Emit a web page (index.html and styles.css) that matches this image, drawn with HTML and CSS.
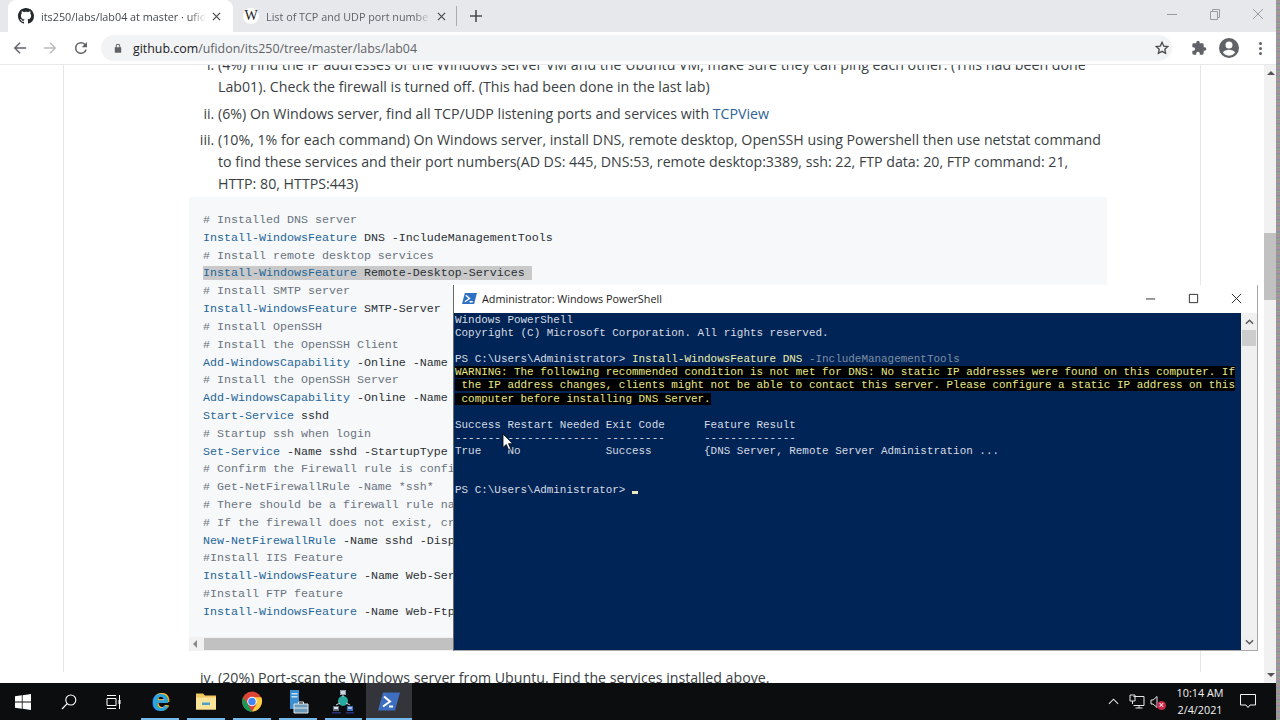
FILE: index.html
```html
<!DOCTYPE html>
<html lang="en">
<head>
  <meta charset="UTF-8">
  <title>its250/labs/lab04 at master</title>
  <link rel="stylesheet" href="styles.css">
</head>
<body>

  <!-- Browser tabs -->
  <div class="tabstrip">
    <div class="tab tab-active">
      <svg class="favicon" viewBox="0 0 16 16"><path fill="#24292e" d="M8 0C3.58 0 0 3.58 0 8c0 3.54 2.29 6.53 5.47 7.59.4.07.55-.17.55-.38 0-.19-.01-.82-.01-1.49-2.01.37-2.53-.49-2.69-.94-.09-.23-.48-.94-.82-1.13-.28-.15-.68-.52-.01-.53.63-.01 1.08.58 1.23.82.72 1.21 1.87.87 2.33.66.07-.52.28-.87.51-1.07-1.78-.2-3.64-.89-3.64-3.95 0-.87.31-1.59.82-2.15-.08-.2-.36-1.02.08-2.12 0 0 .67-.21 2.2.82.64-.18 1.32-.27 2-.27s1.36.09 2 .27c1.53-1.04 2.2-.82 2.2-.82.44 1.1.16 1.92.08 2.12.51.56.82 1.27.82 2.15 0 3.07-1.87 3.75-3.65 3.95.29.25.54.73.54 1.48 0 1.07-.01 1.93-.01 2.2 0 .21.15.46.55.38A8.01 8.01 0 0 0 16 8c0-4.42-3.58-8-8-8z"/></svg>
      <span class="tab-title">its250/labs/lab04 at master · ufid</span>
      <svg class="tab-close" viewBox="0 0 10 10"><path d="M1 1l8 8M9 1l-8 8"/></svg>
    </div>
    <div class="tab">
      <span class="wiki-icon">W</span>
      <span class="tab-title">List of TCP and UDP port numbe</span>
      <svg class="tab-close" viewBox="0 0 10 10"><path d="M1 1l8 8M9 1l-8 8"/></svg>
    </div>
    <div class="tab-sep"></div>
    <svg class="new-tab" viewBox="0 0 12 12"><path d="M6 0v12M0 6h12"/></svg>
    <div class="win-controls">
      <svg viewBox="0 0 12 12"><path d="M1 6.5h10"/></svg>
      <svg viewBox="0 0 12 12"><path d="M1.5 3.5h7v8h-7zM3.5 3.5V1.5h7v8h-2"/></svg>
      <svg viewBox="0 0 12 12"><path d="M1 1l10 10M11 1L1 11"/></svg>
    </div>
  </div>

  <!-- Address bar -->
  <div class="toolbar">
    <svg class="tool-btn" viewBox="0 0 16 16"><path d="M15 8H2M8 2L2 8l6 6"/></svg>
    <svg class="tool-btn tool-off" viewBox="0 0 16 16"><path d="M1 8h13M8 2l6 6-6 6"/></svg>
    <svg class="tool-btn reload" viewBox="0 0 24 24"><path d="M17.65 6.35A7.96 7.96 0 0 0 12 4a8 8 0 1 0 7.73 10h-2.08A6 6 0 1 1 12 6c1.66 0 3.14.69 4.22 1.78L13 11h7V4l-2.35 2.35z"/></svg>
    <div class="omnibox">
      <svg class="lock" viewBox="0 0 10 12"><path d="M2.2 5V3.4a2.8 2.8 0 0 1 5.6 0V5H9v7H1V5zM3.4 5h3.2V3.4a1.6 1.6 0 0 0-3.2 0z"/></svg>
      <span class="url"><span class="url-host">github.com</span>/ufidon/its250/tree/master/labs/lab04</span>
      <svg class="star" viewBox="0 0 24 24"><path d="M12 3.5l2.6 5.6 6.1.7-4.5 4.2 1.2 6L12 17l-5.4 3 1.2-6-4.5-4.2 6.1-.7z"/></svg>
    </div>
    <svg class="puzzle" viewBox="0 0 24 24"><path d="M20.5 11H19V7a2 2 0 0 0-2-2h-4V3.5a2.5 2.5 0 0 0-5 0V5H4a2 2 0 0 0-2 2v3.800h1.500a2.700 2.700 0 0 1 0 5.400H2V20a2 2 0 0 0 2 2h3.800v-1.500a2.700 2.700 0 0 1 5.400 0V22H17a2 2 0 0 0 2-2v-4h1.500a2.500 2.500 0 0 0 0-5z"/></svg>
    <svg class="avatar" viewBox="0 0 24 24"><path d="M12 2a10 10 0 1 0 0 20 10 10 0 0 0 0-20zm0 3.500a3.500 3.500 0 1 1 0 7 3.500 3.500 0 0 1 0-7zm0 14.200a7.600 7.600 0 0 1-6-2.900c0-2 4-3.100 6-3.100s6 1.100 6 3.100a7.600 7.600 0 0 1-6 2.900z"/></svg>
    <div class="menu-dots"><i></i><i></i><i></i></div>
  </div>

  <!-- Page and the PowerShell window on top of it -->
  <div class="viewport">
    <div class="page">
      <div class="article">
        <ol class="steps">
          <li>(4%) Find the IP addresses of the Windows server VM and the Ubuntu VM, make sure they can ping each other. (This had been done Lab01). Check the firewall is turned off. (This had been done in the last lab)</li>
          <li>(6%) On Windows server, find all TCP/UDP listening ports and services with <a href="#">TCPView</a></li>
          <li>(10%, 1% for each command) On Windows server, install DNS, remote desktop, OpenSSH using Powershell then use netstat command to find these services and their port numbers(AD DS: 445, DNS:53, remote desktop:3389, ssh: 22, FTP data: 20, FTP command: 21, HTTP: 80, HTTPS:443)</li>
        </ol>

        <div class="code-block">
<pre class="code"><span class="cm"># Installed DNS server</span>
<span class="cmd">Install-WindowsFeature</span> DNS -IncludeManagementTools
<span class="cm"># Install remote desktop services</span>
<span class="selected"><span class="cmd">Install-WindowsFeature</span> Remote-Desktop-Services</span>
<span class="cm"># Install SMTP server</span>
<span class="cmd">Install-WindowsFeature</span> SMTP-Server
<span class="cm"># Install OpenSSH</span>
<span class="cm"># Install the OpenSSH Client</span>
<span class="cmd">Add-WindowsCapability</span> -Online -Name
<span class="cm"># Install the OpenSSH Server</span>
<span class="cmd">Add-WindowsCapability</span> -Online -Name
<span class="cmd">Start-Service</span> sshd
<span class="cm"># Startup ssh when login</span>
<span class="cmd">Set-Service</span> -Name sshd -StartupType
<span class="cm"># Confirm the Firewall rule is configured</span>
<span class="cm"># Get-NetFirewallRule -Name *ssh*</span>
<span class="cm"># There should be a firewall rule named</span>
<span class="cm"># If the firewall does not exist, create</span>
<span class="cmd">New-NetFirewallRule</span> -Name sshd -Display
<span class="cm">#Install IIS Feature</span>
<span class="cmd">Install-WindowsFeature</span> -Name Web-Server
<span class="cm">#Install FTP feature</span>
<span class="cmd">Install-WindowsFeature</span> -Name Web-Ftp</pre>
          <div class="code-scroll">
            <span class="arrow-left"></span>
            <div class="code-thumb"></div>
          </div>
        </div>

        <ol class="steps steps-next" start="4">
          <li>(20%) Port-scan the Windows server from Ubuntu. Find the services installed above.</li>
        </ol>
      </div>
    </div>

    <div class="page-scrollbar">
      <span class="arrow-up"></span>
      <div class="page-thumb"></div>
      <span class="arrow-down"></span>
    </div>

    <div class="ps-window">
      <div class="ps-title">
        <svg class="ps-icon" viewBox="0 0 16 14"><path fill="#2f6fc4" d="M3 1h13l-3 12H0z"/><path fill="none" stroke="#fff" stroke-width="1.500" d="M4 3.500l4 3.500-5 3.500M8 10.500h3.500"/></svg>
        <span class="ps-name">Administrator: Windows PowerShell</span>
        <div class="ps-controls">
          <svg viewBox="0 0 12 12"><path d="M1 6.500h10"/></svg>
          <svg viewBox="0 0 12 12"><path d="M1.500 1.500h9v9h-9z"/></svg>
          <svg viewBox="0 0 12 12"><path d="M1 1l10 10M11 1L1 11"/></svg>
        </div>
      </div>
      <div class="ps-body">
<pre class="console">Windows PowerShell
Copyright (C) Microsoft Corporation. All rights reserved.

PS C:\Users\Administrator&gt; <span class="c-cmd">Install-WindowsFeature DNS</span> <span class="c-opt">-IncludeManagementTools</span>
<span class="c-warn">WARNING: The following recommended condition is not met for DNS: No static IP addresses were found on this computer. If</span>
<span class="c-warn"> the IP address changes, clients might not be able to contact this server. Please configure a static IP address on this</span>
<span class="c-warn"> computer before installing DNS Server.</span>

Success Restart Needed Exit Code      Feature Result
------- -------------- ---------      --------------
True    No             Success        {DNS Server, Remote Server Administration ...


PS C:\Users\Administrator&gt; <span class="caret"></span></pre>
        <div class="ps-scroll">
          <svg class="ps-arrow" viewBox="0 0 10 6"><path d="M1 5l4-4 4 4"/></svg>
          <div class="ps-thumb"></div>
          <svg class="ps-arrow ps-arrow-down" viewBox="0 0 10 6"><path d="M1 1l4 4 4-4"/></svg>
        </div>
      </div>
    </div>

    <svg class="mouse" viewBox="0 0 12 18"><path fill="#fff" stroke="#000" stroke-width=".8" d="M1 1v13.500l3.300-3 2.300 5.200 2.200-1-2.300-5h4.300z"/></svg>
  </div>

  <!-- Windows taskbar -->
  <div class="taskbar">
    <div class="task-icon">
      <svg class="i18" viewBox="0 0 16 16"><path fill="#fff" d="M0 2.300l6.800-1v6.300H0zM7.600 1.200L16 0v7.600H7.600zM0 8.400h6.800v6.300l-6.800-1zM7.600 8.400H16V16l-8.400-1.200z"/></svg>
    </div>
    <div class="task-icon">
      <svg class="i18" viewBox="0 0 16 16"><circle cx="9.800" cy="6" r="5" fill="none" stroke="#fff" stroke-width="1.100"/><path stroke="#fff" stroke-width="1.200" d="M6.200 9.600L1 15"/></svg>
    </div>
    <div class="task-icon">
      <svg class="i18" viewBox="0 0 16 16"><path fill="none" stroke="#fff" d="M1 4.500h9v7H1zM1 1.500h9M1 14.500h9M13.500 1v5M13.500 10v5"/><path fill="#fff" d="M12.500 6h2v4h-2z"/></svg>
    </div>
    <div class="task-icon running">
      <span class="ie-icon">e</span>
    </div>
    <div class="task-icon running">
      <svg class="i22" viewBox="0 0 22 20"><path fill="#f2c661" d="M1 2h7l2 2h11v14H1z"/><path fill="#fbe39a" d="M1 6h20v12H1z"/><path fill="#4aa3c9" d="M7 11h8v2.500H7z"/></svg>
    </div>
    <div class="task-icon running">
      <svg class="i22" viewBox="0 0 22 22"><circle cx="11" cy="11" r="10.500" fill="#db4437"/><path fill="#0f9d58" d="M1.800 6.500L6.400 14l4.600 8a11 11 0 0 1-9.200-15.500z"/><path fill="#ffcd40" d="M11 6.500h9.800A11 11 0 0 1 11 21.500l4.800-8z"/><circle cx="11" cy="11" r="5" fill="#fff"/><circle cx="11" cy="11" r="3.900" fill="#4285f4"/></svg>
    </div>
    <div class="task-icon running">
      <svg class="i26" viewBox="0 0 24 26"><path fill="#3b8ed0" d="M4 1h9v19H4z"/><path fill="#bfe0f5" d="M5.500 4h6v1.500h-6zM5.500 7h6v1.500h-6z"/><path fill="#6d9ab8" stroke="#dde8ef" d="M8 15h14v9H8z"/><path stroke="#dde8ef" fill="none" d="M12.500 15v-2h5v2M8 19h14"/></svg>
    </div>
    <div class="task-icon running">
      <svg class="i26" viewBox="0 0 24 26"><path fill="#8b9aa8" d="M9 1h6v5H9z"/><path fill="#cfd6dc" d="M10 2h4v3h-4z"/><circle cx="12" cy="12" r="5" fill="#27a9a1"/><path stroke="#d0d6da" d="M12 6v2M5 16l4-2M19 16l-4-2"/><path fill="#5d6f80" d="M2 17h6v5H2z"/><path fill="#3f6fc0" d="M16 17h6v5h-6z"/><path fill="#e0e4e8" d="M3 18h4v2H3z"/><path fill="#9fc0ea" d="M17 18h4v2h-4z"/><path fill="#2a2f77" d="M1 23h9v1.500H1zM15 23h8v1.500h-8z"/></svg>
    </div>
    <div class="task-icon running active">
      <svg class="i22" viewBox="0 0 22 20"><path fill="#3d6ec0" d="M5 1h17l-5 18H0z"/><path fill="none" stroke="#fff" stroke-width="2" d="M6 5l6 5-7 5M11 15h4"/></svg>
    </div>

    <div class="tray">
      <svg class="tray-chevron" viewBox="0 0 12 7"><path d="M1 6l5-5 5 5"/></svg>
      <svg class="tray-net" viewBox="0 0 16 15"><path d="M4.500 2.500H15v9H4.500M10 11.500v2.500M6.500 14h7M1 1h5v6H1zM3.500 7v3"/></svg>
      <div class="tray-sound">
        <svg viewBox="0 0 10 14"><path d="M1 5v4h2l4 3.500v-11L3 5z"/></svg>
        <span class="mute-badge">×</span>
      </div>
      <div class="clock">
        <div>10:14 AM</div>
        <div>2/4/2021</div>
      </div>
      <svg class="tray-notify" viewBox="0 0 16 15"><path d="M.5.500h15v10.500H10l-2 2.500-2-2.500H.5z"/></svg>
    </div>
  </div>

  <div class="edge-noise"></div>

</body>
</html>
```

FILE: styles.css
```css
/* Global */
html, body {
  height: 100%;
}

body {
  margin: 0;
  display: flex;
  flex-direction: column;
  height: 720px;
  overflow: hidden;
  font-family: "Open Sans", Arial, sans-serif;
  background-color: #fff;
  color: #24292e;
}

svg {
  display: block;
  flex: none;
}

/* Browser tabs */
.tabstrip {
  height: 32px;
  flex: none;
  display: flex;
  align-items: flex-end;
  padding-left: 8px;
  background-color: #e6e8eb;
}

.tab {
  width: 225px;
  height: 32px;
  box-sizing: border-box;
  display: flex;
  align-items: center;
  padding: 0 12px 0 10px;
  font-size: 10.8px;
  color: #5f6368;
}

.tab-active {
  background-color: #fff;
  border-radius: 8px 8px 0 0;
  color: #45494d;
}

.favicon {
  width: 16px;
  height: 16px;
  margin-right: 7px;
}

.wiki-icon {
  width: 16px;
  height: 16px;
  margin-right: 7px;
  border-radius: 50%;
  background-color: #fff;
  font-family: "Liberation Serif", serif;
  font-size: 14px;
  line-height: 16px;
  text-align: center;
  color: #222;
}

.tab-title {
  flex: 1;
  white-space: nowrap;
  overflow: hidden;
  -webkit-mask-image: linear-gradient(to right, #000 90%, transparent 100%);
  mask-image: linear-gradient(to right, #000 90%, transparent 100%);
}

.tab-close {
  width: 9px;
  height: 9px;
  margin-left: 6px;
  fill: none;
  stroke: #4a4d50;
  stroke-width: 1.400;
}

.tab-sep {
  width: 1px;
  height: 20px;
  margin: 0 0 6px -2px;
  background-color: #a9acb0;
}

.new-tab {
  width: 12px;
  height: 12px;
  margin: 0 0 10px 13px;
  fill: none;
  stroke: #4a4d50;
  stroke-width: 1.600;
}

.win-controls {
  margin-left: auto;
  align-self: flex-start;
  display: flex;
  gap: 31px;
  padding: 8px 16px 0 0;
}

.win-controls svg {
  width: 12px;
  height: 12px;
  fill: none;
  stroke: #9a9c9f;
}

/* Address bar */
.toolbar {
  height: 33px;
  flex: none;
  display: flex;
  align-items: center;
  padding-left: 13px;
  box-sizing: border-box;
  background-color: #fff;
  border-bottom: 1px solid #e8e9eb;
}

.tool-btn {
  width: 14px;
  height: 14px;
  margin-right: 16px;
  fill: none;
  stroke: #5f6368;
  stroke-width: 1.600;
}

.tool-off {
  stroke: #b9bbbe;
}

.reload {
  width: 18px;
  height: 18px;
  margin: 0 11px 0 -1px;
  fill: #5f6368;
  stroke: none;
}

.omnibox {
  width: 1071px;
  height: 26px;
  display: flex;
  align-items: center;
  padding: 0 0 0 13px;
  box-sizing: border-box;
  border-radius: 13px;
  background-color: #f1f3f4;
  flex: none;
}

.lock {
  width: 8px;
  height: 10px;
  fill: #5f6368;
}

.url {
  margin-left: 11px;
  font-size: 12.4px;
  color: #5f6368;
  white-space: nowrap;
}

.url-host {
  color: #202124;
}

.star {
  width: 16px;
  height: 16px;
  margin-left: auto;
  margin-right: 2px;
  fill: none;
  stroke: #4a4d50;
  stroke-width: 2;
}

.puzzle {
  width: 16px;
  height: 16px;
  margin-left: 19px;
  fill: #5f6368;
}

.avatar {
  width: 24px;
  height: 24px;
  margin-left: 10px;
  fill: #5f6368;
}

.menu-dots {
  margin-left: 18px;
  display: flex;
  flex-direction: column;
  gap: 2px;
}

.menu-dots i {
  display: block;
  width: 3px;
  height: 3px;
  border-radius: 50%;
  background-color: #5f6368;
}

/* Page */
.viewport {
  flex: 1;
  min-height: 0;
  display: flex;
  position: relative;
}

.page {
  flex: 1;
  min-width: 0;
  overflow: hidden;
}

.article {
  margin-left: 63px;
  width: 1138px;
  height: 100%;
  box-sizing: border-box;
  border-left: 1px solid #e4e6e8;
  border-right: 1px solid #e4e6e8;
}

.steps {
  margin: -11px 0 0;
  padding: 0 96px 0 154px;
  list-style-type: lower-roman;
  font-size: 14.2px;
  line-height: 22px;
  color: #3a3f44;
}

.steps-next {
  margin-top: 16px;
}

.steps li {
  margin-bottom: 4.5px;
}

.steps li:last-child {
  margin-bottom: 0;
}

.steps a {
  color: #2f6298;
  text-decoration: none;
}

.code-block {
  margin: 2px 0 0 125px;
  width: 918px;
  background-color: #f6f8fa;
}

.code {
  margin: 0;
  padding: 15px 14px;
  font-family: "Liberation Mono", monospace;
  font-size: 11.67px;
  line-height: 17.82px;
  color: #2b3035;
  overflow: hidden;
}

.cm {
  color: #6a737d;
}

.cmd {
  color: #1f6597;
}

.selected {
  background-color: #c9c9c9;
  padding-right: 7px;
}

.code-scroll {
  height: 14px;
  display: flex;
  align-items: center;
  background-color: #f1f1f1;
}

.arrow-left {
  margin-left: 4px;
  border: 4px solid transparent;
  border-right-color: #8a8a8a;
  border-left-width: 0;
}

.code-thumb {
  width: 600px;
  height: 12px;
  margin-left: 7px;
  background-color: #c1c1c1;
}

/* Right scrollbar of the browser */
.page-scrollbar {
  width: 16px;
  flex: none;
  display: flex;
  flex-direction: column;
  align-items: center;
  background-color: #f1f1f1;
  padding-right: 2px;
  box-sizing: border-box;
}

.arrow-up {
  margin-top: 6px;
  border: 4px solid transparent;
  border-bottom-color: #555;
  border-top-width: 0;
}

.arrow-down {
  margin-top: auto;
  margin-bottom: 6px;
  border: 4px solid transparent;
  border-top-color: #555;
  border-bottom-width: 0;
}

.page-thumb {
  width: 14px;
  height: 67px;
  margin-top: 158px;
  background-color: #c1c1c1;
}

/* PowerShell window */
.ps-window {
  position: absolute;
  left: 453px;
  top: 220px;
  width: 805px;
  height: 366px;
  box-sizing: border-box;
  display: flex;
  flex-direction: column;
  border: 1px solid #a8a8a8;
  border-left-color: #6b6b6b;
  border-top: 0;
  background-color: #fff;
}

.ps-title {
  height: 28px;
  flex: none;
  box-sizing: border-box;
  display: flex;
  align-items: center;
  padding: 0 0 2px 8px;
  background-color: #fff;
}

.ps-icon {
  width: 15px;
  height: 13px;
}

.ps-name {
  margin-left: 5px;
  font-size: 10.8px;
  color: #222;
}

.ps-controls {
  margin-left: auto;
  display: flex;
  gap: 32px;
  padding-right: 15px;
}

.ps-controls svg {
  width: 11px;
  height: 11px;
  fill: none;
  stroke: #222;
}

.ps-body {
  flex: 1;
  min-height: 0;
  display: flex;
}

.console {
  flex: 1;
  margin: 0;
  padding: 1px 0 0 1px;
  background-color: #012456;
  font-family: "Liberation Mono", monospace;
  font-size: 10.930px;
  line-height: 13.100px;
  color: #d6dbe3;
  overflow: hidden;
}

.c-cmd {
  color: #eeeeaa;
}

.c-opt {
  color: #7f8ea3;
}

.c-warn {
  background-color: #000;
  color: #e9ea84;
}

.caret {
  display: inline-block;
  width: 6px;
  height: 3px;
  background-color: #e9e9c0;
  vertical-align: -1px;
}

.ps-scroll {
  width: 16px;
  flex: none;
  display: flex;
  flex-direction: column;
  align-items: center;
  background-color: #f0f0f0;
}

.ps-arrow {
  width: 9px;
  height: 6px;
  margin-top: 6px;
  fill: none;
  stroke: #555;
  stroke-width: 1.500;
}

.ps-arrow-down {
  margin-top: auto;
  margin-bottom: 5px;
}

.ps-thumb {
  width: 14px;
  height: 16px;
  margin-top: 5px;
  background-color: #cdcdcd;
}

.mouse {
  position: absolute;
  left: 502px;
  top: 368px;
  width: 12px;
  height: 18px;
}

/* Taskbar */
.taskbar {
  height: 37px;
  flex: none;
  display: flex;
  background-color: #0c0d0e;
  position: relative;
}

.task-icon {
  width: 45.8px;
  height: 37px;
  flex: none;
  box-sizing: border-box;
  display: flex;
  align-items: center;
  justify-content: center;
  position: relative;
}

.task-icon.running::after {
  content: "";
  position: absolute;
  left: 4px;
  right: 4px;
  bottom: 0;
  height: 2px;
  background-color: #76b9ed;
}

.task-icon.active {
  background-color: #33353a;
}

.task-icon.active::after {
  left: 0;
  right: 0;
}

.i18 {
  width: 16px;
  height: 16px;
}

.i22 {
  width: 22px;
  height: 21px;
}

.i26 {
  width: 24px;
  height: 26px;
}

.ie-icon {
  font-family: "Liberation Sans", sans-serif;
  font-weight: bold;
  font-size: 32px;
  line-height: 30px;
  height: 34px;
  color: #2fa4dc;
  text-shadow: 1px -1px 0 #f5c342;
}

.tray {
  margin-left: auto;
  display: flex;
  align-items: center;
  padding-right: 24px;
}

.tray-chevron {
  width: 11px;
  height: 7px;
  fill: none;
  stroke: #e6e6e6;
  stroke-width: 1.200;
}

.tray-net {
  width: 16px;
  height: 15px;
  margin-left: 10px;
  fill: none;
  stroke: #e6e6e6;
}

.tray-sound {
  margin-left: 5px;
  position: relative;
}

.tray-sound svg {
  width: 10px;
  height: 14px;
  fill: none;
  stroke: #e6e6e6;
}

.mute-badge {
  position: absolute;
  left: 7px;
  top: 6px;
  width: 9px;
  height: 9px;
  border-radius: 50%;
  background-color: #c8284a;
  font-family: "Liberation Sans", sans-serif;
  font-size: 9px;
  line-height: 9px;
  text-align: center;
  color: #fff;
}

.clock {
  margin-left: 10px;
  width: 60px;
  font-size: 10.8px;
  line-height: 16.5px;
  text-align: center;
  color: #f2f2f2;
}

.tray-notify {
  width: 16px;
  height: 15px;
  margin-left: 10px;
  fill: none;
  stroke: #f2f2f2;
}

/* Video noise down the right edge of the capture */
.edge-noise {
  position: absolute;
  top: 0;
  right: 0;
  width: 4px;
  height: 720px;
  background: repeating-linear-gradient(to bottom, #8e9a8c 0, #b58f9d 2px, #7f93a8 4px, #a8a97e 6px);
}
```
